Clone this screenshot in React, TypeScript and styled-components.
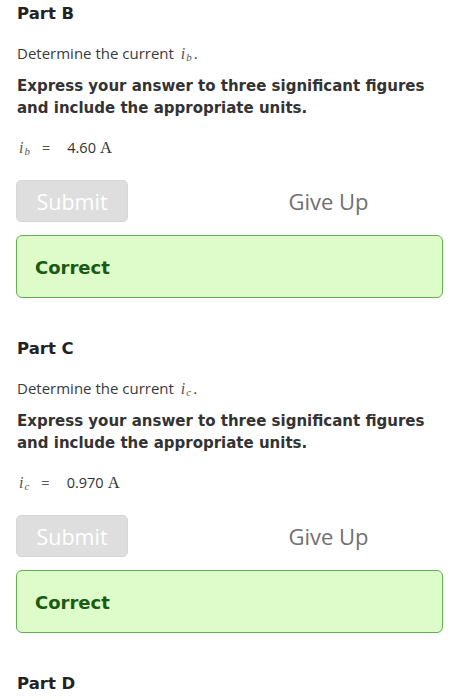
import styled, { createGlobalStyle } from 'styled-components';

const GlobalStyle = createGlobalStyle`
  html, body {
    margin: 0;
    padding: 0;
    background: #fff;
  }
  body {
    font-family: "Open Sans", Lato, sans-serif;
    color: #333;
  }
`;

const heavy = `"DejaVu Sans", "Open Sans", sans-serif`;

const Page = styled.div`
  width: 458px;
  padding: 0 15px 0 16px;
  box-sizing: border-box;
`;

const PartBlock = styled.section`
  display: flex;
  flex-direction: column;
  height: 335px;
`;

const PartTitle = styled.h2`
  margin: 4px 0 0 1px;
  font-family: ${heavy};
  font-size: 16.5px;
  line-height: 20px;
  font-weight: 700;
  color: #222;
`;

const Prompt = styled.p`
  margin: 19px 0 0 1px;
  font-size: 15px;
  line-height: 20px;
  color: #3a3a3a;
`;

const Instruction = styled.p`
  margin: 12px 0 0 1px;
  font-family: ${heavy};
  font-size: 15px;
  line-height: 21.5px;
  font-weight: 700;
  color: #333;
`;

const MathVar = styled.span`
  font-family: "Liberation Serif", "DejaVu Serif", serif;
  font-style: italic;
  font-size: 16px;
  color: #555;
  margin: 0 2px 0 3px;
  sub {
    font-size: 11px;
    vertical-align: -2px;
    line-height: 0;
    margin-left: 1px;
  }
`;

const AnswerRow = styled.div`
  display: flex;
  align-items: baseline;
  margin: 19px 0 0 0;
  font-size: 14.5px;
  line-height: 20px;
  color: #333;
`;

const Equals = styled.span`
  color: #555;
  margin: 0 17px 0 10px;
`;

const Unit = styled.span`
  font-family: "Liberation Serif", "DejaVu Serif", serif;
  font-size: 16.5px;
  margin-left: 4px;
`;

const ButtonRow = styled.div`
  display: flex;
  align-items: center;
  margin-top: 22px;
  height: 42px;
`;

const SubmitButton = styled.button`
  width: 112px;
  height: 42px;
  border: 1px solid #d6d6d6;
  border-radius: 5px;
  background: #dedede;
  color: #fff;
  font-family: "Open Sans", Lato, sans-serif;
  font-size: 21.5px;
  padding: 0;
`;

const GiveUp = styled.span`
  flex: 1;
  text-align: center;
  padding-left: 86px;
  font-size: 22px;
  color: #707070;
`;

const Feedback = styled.div`
  margin-top: 13px;
  height: 63px;
  box-sizing: border-box;
  display: flex;
  align-items: center;
  padding: 2px 18px 0;
  border: 1.5px solid #63ae52;
  border-radius: 6px;
  background: #ddfcc9;
  color: #1b5a12;
  font-family: ${heavy};
  font-size: 18px;
  font-weight: 700;
`;

type Part = { label: string; sub: string; value: string };

const parts: Part[] = [
  { label: 'B', sub: 'b', value: '4.60' },
  { label: 'C', sub: 'c', value: '0.970' },
];

function Variable({ sub }: { sub: string }) {
  return (
    <MathVar>
      i<sub>{sub}</sub>
    </MathVar>
  );
}

export default function App() {
  return (
    <Page>
      <GlobalStyle />
      {parts.map((p) => (
        <PartBlock key={p.label}>
          <PartTitle>Part {p.label}</PartTitle>
          <Prompt>
            Determine the current <Variable sub={p.sub} />.
          </Prompt>
          <Instruction>
            Express your answer to three significant figures and include the appropriate units.
          </Instruction>
          <AnswerRow>
            <Variable sub={p.sub} />
            <Equals>=</Equals>
            <span>{p.value}</span>
            <Unit>A</Unit>
          </AnswerRow>
          <ButtonRow>
            <SubmitButton disabled>Submit</SubmitButton>
            <GiveUp>Give Up</GiveUp>
          </ButtonRow>
          <Feedback>Correct</Feedback>
        </PartBlock>
      ))}
      <PartTitle>Part D</PartTitle>
    </Page>
  );
}
